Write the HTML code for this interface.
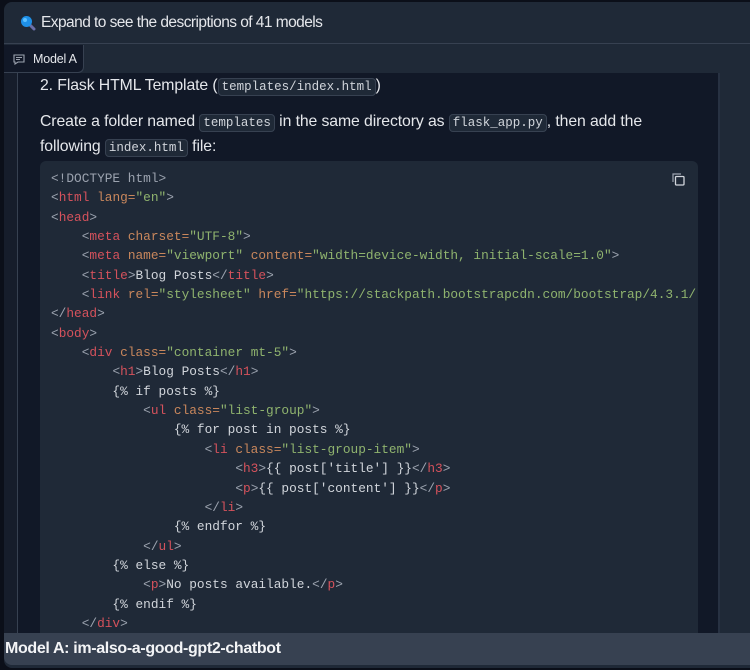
<!DOCTYPE html>
<html><head><meta charset="utf-8"><style>
*{margin:0;padding:0;box-sizing:border-box}
body{width:750px;height:670px;background:#0b0f19;overflow:hidden;font-family:"Liberation Sans",sans-serif;position:relative}
.frame{position:absolute;left:4px;top:2px;width:760px;height:666px;background:#1f2937;border-radius:8px 0 0 8px;overflow:hidden}
.hdr{position:absolute;left:0;top:0;right:0;height:42px;border-bottom:1px solid #374151;color:#e5e7eb;font-size:15.5px;letter-spacing:-0.55px;line-height:42px;padding-left:37px}
.mag{position:absolute;left:16px;top:13px}
.tab{position:absolute;left:0;top:43px;width:80px;height:28px;background:#111827;border-right:1px solid #374151;border-bottom:1px solid #374151;border-radius:0 0 6px 0;color:#e5e7eb;font-size:12.5px;letter-spacing:-0.2px;line-height:28px;padding-left:29px}
.tab svg{position:absolute;left:9px;top:9px}
.left{position:absolute;left:0;top:71px;width:13px;height:562px;background:#161d2b}
.lb{position:absolute;left:13px;top:71px;width:1px;height:562px;background:#374151}
.panel{position:absolute;left:14px;top:71px;width:702px;height:562px;background:#111827;border-right:2px solid #273142}
.p{position:absolute;left:22px;color:#e5e7eb;font-size:15.8px;letter-spacing:-0.1px}
code{font-family:"Liberation Mono",monospace;font-size:12.5px;letter-spacing:0;background:#1f2937;border:1px solid #374151;border-radius:4px;padding:1px 3px;color:#d1d5db}
.code{position:absolute;left:22px;top:88px;width:658px;height:500px;background:#1f2937;border-radius:6px;overflow:hidden}
pre{position:absolute;left:11px;top:8px;font-family:"Liberation Mono",monospace;font-size:12.8px;line-height:19.35px;color:#d1d5db}
.t{color:#d5525c}.a{color:#c9875c}.s{color:#8fb36e}.b{color:#9ca3af}
.copy{position:absolute;right:13px;top:12px}
.bot{position:absolute;top:633px;height:32px;background:#374151;color:#f3f4f6;font-size:16px;font-weight:bold;letter-spacing:-0.35px;line-height:32px;padding-left:1px}
</style></head><body>
<div class="frame">
<div class="hdr"><svg class="mag" width="16" height="16" viewBox="0 0 16 16"><line x1="9" y1="9" x2="14" y2="14" stroke="#6b6fa8" stroke-width="3" stroke-linecap="round"/><circle cx="6.5" cy="6.5" r="5.5" fill="#1e90e8"/><circle cx="5" cy="5" r="2" fill="#5cc0ff"/></svg>Expand to see the descriptions of 41 models</div>
<div class="tab"><svg width="12" height="11" viewBox="0 0 12 11"><path d="M1 1h10v7H5l-3 2V8H1z" fill="none" stroke="#9ca3af" stroke-width="1.1"/><line x1="3" y1="3.5" x2="9" y2="3.5" stroke="#9ca3af"/><line x1="3" y1="5.5" x2="7" y2="5.5" stroke="#9ca3af"/></svg>Model A</div>
<div class="left"></div><div class="lb"></div>
<div class="panel">
<div class="p" style="top:4px">2. Flask HTML Template (<code>templates/index.html</code>)</div>
<div class="p" style="top:37px;line-height:24px">Create a folder named <code>templates</code> in the same directory as <code>flask_app.py</code>, then add the<br>following <code>index.html</code> file:</div>
<div class="code">
<svg class="copy" width="13" height="13" viewBox="0 0 13 13"><path d="M1 9V1h8" fill="none" stroke="#9ca3af" stroke-width="1.2"/><rect x="3.5" y="3.5" width="8.5" height="8.5" rx="1" fill="none" stroke="#d1d5db" stroke-width="1.3"/></svg>
<pre><span class="b">&lt;!DOCTYPE html&gt;</span>
<span class="b">&lt;</span><span class="t">html</span> <span class="a">lang=</span><span class="s">"en"</span><span class="b">&gt;</span>
<span class="b">&lt;</span><span class="t">head</span><span class="b">&gt;</span>
    <span class="b">&lt;</span><span class="t">meta</span> <span class="a">charset=</span><span class="s">"UTF-8"</span><span class="b">&gt;</span>
    <span class="b">&lt;</span><span class="t">meta</span> <span class="a">name=</span><span class="s">"viewport"</span> <span class="a">content=</span><span class="s">"width=device-width, initial-scale=1.0"</span><span class="b">&gt;</span>
    <span class="b">&lt;</span><span class="t">title</span><span class="b">&gt;</span>Blog Posts<span class="b">&lt;/</span><span class="t">title</span><span class="b">&gt;</span>
    <span class="b">&lt;</span><span class="t">link</span> <span class="a">rel=</span><span class="s">"stylesheet"</span> <span class="a">href=</span><span class="s">"https://stackpath.bootstrapcdn.com/bootstrap/4.3.1/</span>
<span class="b">&lt;/</span><span class="t">head</span><span class="b">&gt;</span>
<span class="b">&lt;</span><span class="t">body</span><span class="b">&gt;</span>
    <span class="b">&lt;</span><span class="t">div</span> <span class="a">class=</span><span class="s">"container mt-5"</span><span class="b">&gt;</span>
        <span class="b">&lt;</span><span class="t">h1</span><span class="b">&gt;</span>Blog Posts<span class="b">&lt;/</span><span class="t">h1</span><span class="b">&gt;</span>
        {% if posts %}
            <span class="b">&lt;</span><span class="t">ul</span> <span class="a">class=</span><span class="s">"list-group"</span><span class="b">&gt;</span>
                {% for post in posts %}
                    <span class="b">&lt;</span><span class="t">li</span> <span class="a">class=</span><span class="s">"list-group-item"</span><span class="b">&gt;</span>
                        <span class="b">&lt;</span><span class="t">h3</span><span class="b">&gt;</span>{{ post['title'] }}<span class="b">&lt;/</span><span class="t">h3</span><span class="b">&gt;</span>
                        <span class="b">&lt;</span><span class="t">p</span><span class="b">&gt;</span>{{ post['content'] }}<span class="b">&lt;/</span><span class="t">p</span><span class="b">&gt;</span>
                    <span class="b">&lt;/</span><span class="t">li</span><span class="b">&gt;</span>
                {% endfor %}
            <span class="b">&lt;/</span><span class="t">ul</span><span class="b">&gt;</span>
        {% else %}
            <span class="b">&lt;</span><span class="t">p</span><span class="b">&gt;</span>No posts available.<span class="b">&lt;/</span><span class="t">p</span><span class="b">&gt;</span>
        {% endif %}
    <span class="b">&lt;/</span><span class="t">div</span><span class="b">&gt;</span></pre>
</div>
</div>
</div>
<div class="bot" style="border-radius:0 0 0 8px;left:4px;width:746px">Model A: im-also-a-good-gpt2-chatbot</div>
</body></html>
